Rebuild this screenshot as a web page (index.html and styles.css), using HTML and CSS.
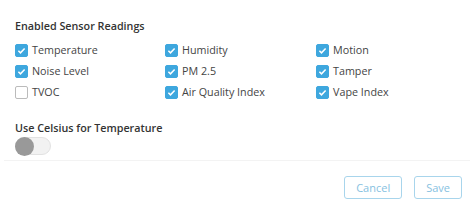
FILE: index.html
```html
<!DOCTYPE html>
<html lang="en">
<head>
    <meta charset="UTF-8">
    <title>Sensor Settings</title>
    <link rel="stylesheet" href="styles.css">
</head>
<body>
    <div class="settings">
        <div class="settings-body">
            <h2 class="section-title">Enabled Sensor Readings</h2>
            <div class="sensor-grid">
                <label class="sensor"><span class="box checked"></span>Temperature</label>
                <label class="sensor"><span class="box checked"></span>Humidity</label>
                <label class="sensor"><span class="box checked"></span>Motion</label>
                <label class="sensor"><span class="box checked"></span>Noise Level</label>
                <label class="sensor"><span class="box checked"></span>PM 2.5</label>
                <label class="sensor"><span class="box checked"></span>Tamper</label>
                <label class="sensor"><span class="box"></span>TVOC</label>
                <label class="sensor"><span class="box checked"></span>Air Quality Index</label>
                <label class="sensor"><span class="box checked"></span>Vape Index</label>
            </div>

            <h2 class="section-title celsius-title">Use Celsius for Temperature</h2>
            <div class="toggle"><span class="knob"></span></div>
        </div>

        <div class="settings-footer">
            <button class="btn">Cancel</button>
            <button class="btn">Save</button>
        </div>
    </div>
</body>
</html>
```

FILE: styles.css
```css
body {
    margin: 0;
    background: #ffffff;
    font-family: "Open Sans", "Liberation Sans", sans-serif;
    color: #444444;
}

.settings {
    width: 474px;
}

.settings-body {
    padding: 18px 11px 3px 11px;
    border-bottom: 1px solid #f3f3f3;
    margin: 0 4px;
}

.section-title {
    font-size: 10.75px;
    font-weight: 600;
    color: #333333;
    margin: 0 0 7px 0;
    line-height: 16px;
}

.sensor-grid {
    display: grid;
    grid-template-columns: 150px 151px 150px;
    row-gap: 3px;
}

.sensor {
    display: flex;
    align-items: center;
    font-size: 10.75px;
    line-height: 18px;
    color: #444444;
}

.box {
    width: 11px;
    height: 11px;
    border: 1px solid #bbbbbb;
    border-radius: 2px;
    margin-right: 4px;
    box-sizing: content-box;
    flex: none;
}

.box.checked {
    background: #3ea7de;
    border-color: #3ea7de;
    background-image: url("data:image/svg+xml;utf8,<svg xmlns='http://www.w3.org/2000/svg' viewBox='0 0 12 12'><path d='M2.6 6.2l2.3 2.3 4.5-4.6' fill='none' stroke='white' stroke-width='1.7'/></svg>");
    background-size: 11px 11px;
}

.celsius-title {
    margin-top: 19px;
    margin-bottom: 0;
}

.toggle {
    position: relative;
    width: 36px;
    height: 18px;
    border: 1px solid #e2e2e2;
    border-radius: 9px;
    background: #f2f2f2;
    box-sizing: border-box;
    margin: 1px 0 2px 0;
}

.knob {
    position: absolute;
    left: -1px;
    top: -1px;
    width: 19px;
    height: 19px;
    border-radius: 50%;
    background: #999999;
}

.settings-footer {
    display: flex;
    justify-content: flex-end;
    gap: 12px;
    padding: 15px 12px 0 0;
}

.btn {
    font-family: "Open Sans", "Liberation Sans", sans-serif;
    font-size: 11px;
    color: #86c1df;
    background: #ffffff;
    border: 1px solid #a8d5ec;
    border-radius: 3px;
    height: 23px;
    padding: 0 11px;
}
```
